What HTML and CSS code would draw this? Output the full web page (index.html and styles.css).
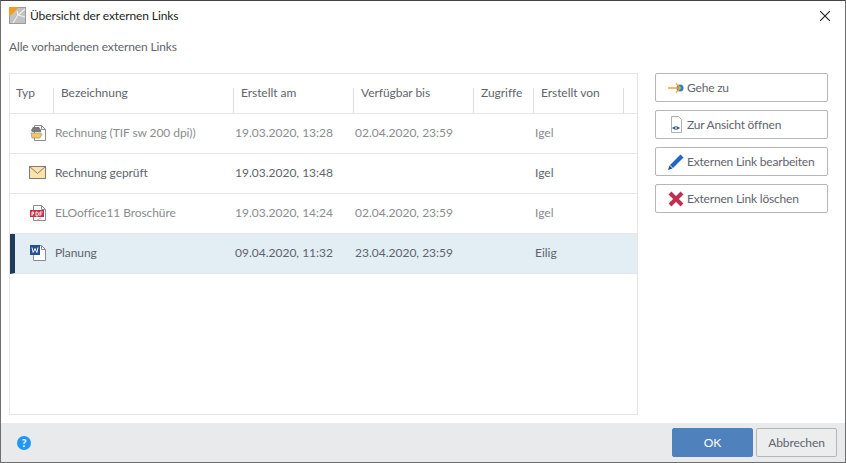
FILE: index.html
```html
<!DOCTYPE html>
<html lang="de">
<head>
<meta charset="utf-8">
<title>Übersicht der externen Links</title>
<link rel="stylesheet" href="styles.css">
</head>
<body>
<div class="window">
  <header class="titlebar">
    <svg class="app-icon" width="17" height="17" viewBox="0 0 17 17">
      <rect x="0.5" y="0.5" width="16" height="16" fill="#c2c2c2" stroke="#9a9a9a"/>
      <path d="M16 2 9 8 4 16M9 8l7 2M9 8 8 4" stroke="#f2f2f2" stroke-width="1.1" fill="none"/>
      <path d="M0 0h10L0 10z" fill="#f39c1f"/>
    </svg>
    <span class="title">Übersicht der externen Links</span>
    <svg class="close" width="10" height="10" viewBox="0 0 10 10"><path d="M0 0l10 10M10 0 0 10" stroke="#222" stroke-width="1.1"/></svg>
  </header>
  <p class="subtitle">Alle vorhandenen externen Links</p>
  <main class="content">
    <section class="table">
      <div class="row head">
        <div class="th">Typ</div>
        <div class="th">Bezeichnung</div>
        <div class="th">Erstellt am</div>
        <div class="th">Verfügbar bis</div>
        <div class="th">Zugriffe</div>
        <div class="th">Erstellt von</div>
        <div class="th last"></div>
      </div>
      <div class="row muted">
        <div class="td icon">
          <svg width="16" height="16" viewBox="0 0 16 16"><path d="M4.500.5h7l4 4v11h-11z" fill="#fff" stroke="#8c8c8c"/><path d="M11.500.5v4h4" fill="none" stroke="#8c8c8c"/><path d="M1 5l2-3h6l2 3v2H2z" fill="#7a7a7a"/><path d="M1 8h10l1 1-2 4H2z" fill="#f4c860" stroke="#888" stroke-width=".6"/></svg>
        </div>
        <div class="td name">Rechnung (TIF sw 200 dpi))</div>
        <div class="td">19.03.2020, 13:28</div>
        <div class="td">02.04.2020, 23:59</div>
        <div class="td"></div>
        <div class="td">Igel</div>
        <div class="td"></div>
      </div>
      <div class="row">
        <div class="td icon">
          <svg width="17" height="13" viewBox="0 0 17 13"><rect x=".5" y=".5" width="16" height="12" fill="#fde3a7" stroke="#7d7d7d"/><path d="M.5.5l8 7 8-7" fill="none" stroke="#7d7d7d"/></svg>
        </div>
        <div class="td name">Rechnung geprüft</div>
        <div class="td">19.03.2020, 13:48</div>
        <div class="td"></div>
        <div class="td"></div>
        <div class="td">Igel</div>
        <div class="td"></div>
      </div>
      <div class="row muted">
        <div class="td icon">
          <svg width="16" height="16" viewBox="0 0 16 16"><path d="M3.500.5h8l4 4v11h-12z" fill="#fff" stroke="#8c8c8c"/><path d="M11.500.5v4h4" fill="none" stroke="#8c8c8c"/><rect y="5" width="14" height="7" fill="#c4314b"/><path d="M2 7v4M2 7h1.600v2H2M6 7v4h1.500l.8-1V8l-.8-1zM10 7v4M10 7h2.600M10 9h2" stroke="#fff" stroke-width=".9" fill="none"/><path d="M7 15l4-2" stroke="#e9a3b0"/></svg>
        </div>
        <div class="td name">ELOoffice11 Broschüre</div>
        <div class="td">19.03.2020, 14:24</div>
        <div class="td">02.04.2020, 23:59</div>
        <div class="td"></div>
        <div class="td">Igel</div>
        <div class="td"></div>
      </div>
      <div class="row selected">
        <div class="td icon">
          <svg width="16" height="16" viewBox="0 0 16 16"><path d="M3.500.5h8l4 4v11h-12z" fill="#fff" stroke="#8c8c8c"/><path d="M11.500.5v4h4" fill="none" stroke="#8c8c8c"/><rect width="10" height="10" fill="#25518f"/><path d="M2 2.500l1.200 5 1.800-4 1.800 4L8 2.500" fill="none" stroke="#fff" stroke-width="1"/></svg>
        </div>
        <div class="td name">Planung</div>
        <div class="td">09.04.2020, 11:32</div>
        <div class="td">23.04.2020, 23:59</div>
        <div class="td"></div>
        <div class="td">Eilig</div>
        <div class="td"></div>
      </div>
    </section>
    <aside class="actions">
      <button class="btn">
        <svg width="16" height="16" viewBox="0 0 16 16"><circle cx="12" cy="8" r="3.500" fill="#1f7fe0"/><path d="M0 8h12M8 3.500l4.500 4.500L8 12.500" fill="none" stroke="#f5a623" stroke-width="1.300"/></svg>
        Gehe zu
      </button>
      <button class="btn">
        <svg width="16" height="17" viewBox="0 0 16 17"><path d="M3.500.5h7l3 3v13h-10z" fill="#fff" stroke="#b0b0b0"/><path d="M4 12q4-3.500 8 0-4 3.500-8 0z" fill="#33506e"/><circle cx="8" cy="12" r="1" fill="#dfe6ee"/></svg>
        Zur Ansicht öffnen
      </button>
      <button class="btn">
        <svg width="16" height="16" viewBox="0 0 16 16"><path d="M12.500.5l3 3L5 14l-3-3z" fill="#2467bd"/><path d="M1.500 11.500l3 3-4.500 1.500z" fill="#1c4f8f"/></svg>
        Externen Link bearbeiten
      </button>
      <button class="btn">
        <svg width="16" height="16" viewBox="0 0 16 16"><path d="M2 2l12 12M14 2 2 14" stroke="#bf3050" stroke-width="4"/></svg>
        Externen Link löschen
      </button>
    </aside>
  </main>
  <footer class="footer">
    <svg class="help" width="14" height="14" viewBox="0 0 14 14"><circle cx="7" cy="7" r="7" fill="#2196f3"/><text x="7" y="11" text-anchor="middle" class="help-q">?</text></svg>
    <div class="footer-buttons">
      <button class="dlg primary">OK</button>
      <button class="dlg">Abbrechen</button>
    </div>
  </footer>
</div>
</body>
</html>
```

FILE: styles.css
```css
* { box-sizing: border-box; }
html, body { margin: 0; padding: 0; height: 100%; background: #fff; }
body { overflow: hidden; }
.window {
  width: 846px; height: 463px;
  display: flex; flex-direction: column;
  border: 1px solid #6f6f6f;
  border-top-color: #444;
  background: #fff;
  font: 12px/16px Lato, "Liberation Sans", sans-serif;
  color: #5f646d;
}
.titlebar { display: flex; align-items: center; height: 30px; padding: 0 15px 0 8px; }
.app-icon { margin-right: 4px; margin-top: -1px; }
.title { flex: 1; font-size: 12px; letter-spacing: -0.1px; color: #1c1c1c; }
.close { margin-top: -1px; }
.subtitle { margin: 8px 0 0 8px; height: 16px; letter-spacing: -0.15px; }
.content { flex: 1; display: flex; padding: 18px 17px 8px 8px; gap: 17px; min-height: 0; }
.table { width: 629px; border: 1px solid #e4e5e7; display: flex; flex-direction: column; }
.row {
  display: grid;
  grid-template-columns: 44px 180px 120px 120px 60px 90px 1fr;
  height: 40px;
  padding-bottom: 2px;
  border-bottom: 1px solid #e6e7e8;
  align-items: center;
}
.head { padding-bottom: 0; }
.th {
  height: 100%; padding: 11px 0 0 7px;
  position: relative;
  letter-spacing: -0.05px;
}
.th:first-child { padding-left: 6px; }
.th:not(.last)::after {
  content: ""; position: absolute; right: 0; top: 14px; bottom: 0;
  width: 1px; background: #dcdde0;
}
.th.last::after { content: none; }
.td { padding-left: 1px; white-space: nowrap; }
.td.name { letter-spacing: -0.08px; }
.td.icon { display: flex; justify-content: flex-end; padding-right: 8px; align-items: center; height: 100%; }
.muted .td { color: #8a8c90; }
.selected { background: #e2edf4; border-left: 5px solid #1f3a5c; grid-template-columns: 39px 180px 120px 120px 60px 90px 1fr; }
.actions { width: 173px; display: flex; flex-direction: column; gap: 8px; }
.btn {
  height: 29px; display: flex; align-items: center; gap: 3px;
  padding: 0 0 0 12px;
  background: #fff; border: 1px solid #b4b6b9; border-radius: 2px;
  font: inherit; letter-spacing: -0.2px; color: #5f646d; text-align: left;
}
.footer {
  height: 39px; background: #e9eaec;
  display: flex; align-items: center; justify-content: space-between;
  padding: 0 8px 0 16px;
}
.help-q { font: bold 11px Lato, sans-serif; fill: #fff; }
.footer-buttons { display: flex; gap: 3px; }
.dlg {
  width: 81px; height: 29px;
  border: 1px solid #b4b6b9; border-radius: 2px;
  background: #eceded;
  font: inherit; letter-spacing: -0.1px; color: #5f646d;
}
.primary { background: #4f81bd; border-color: #4f81bd; color: #fff; }
```
